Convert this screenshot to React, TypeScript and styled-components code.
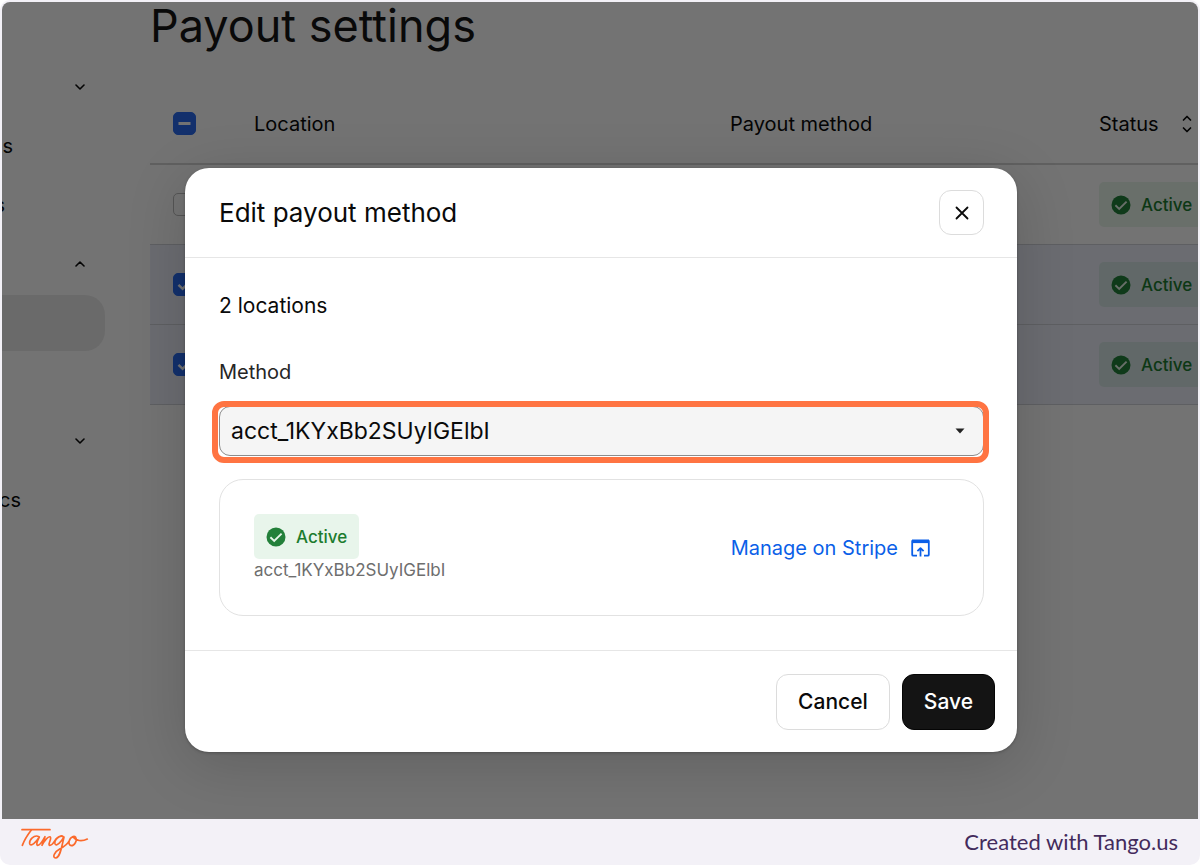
import React from 'react';
import styled, { createGlobalStyle } from 'styled-components';

const GlobalStyle = createGlobalStyle`
  *, *::before, *::after { box-sizing: border-box; }
  body {
    margin: 0;
    background: #ffffff;
    font-family: Inter, "Liberation Sans", sans-serif;
    color: #0a0a0a;
  }
`;

const Frame = styled.div`
  min-height: 100vh;
  display: flex;
  flex-direction: column;
  padding: 2px 2px 0;
  border-radius: 10px;
  background: #f3f1f7;
`;

const Stage = styled.div`
  flex: 1;
  display: grid;
  grid-template-columns: minmax(0, 1fr);
  border-radius: 8px 8px 0 0;
  overflow: hidden;
  background: #ffffff;
`;

const Page = styled.div`
  grid-area: 1 / 1;
  display: flex;
  min-width: 0;
`;

const Sidebar = styled.nav`
  flex: none;
  width: 148px;
  display: flex;
  flex-direction: column;
  gap: 3px;
  padding-top: 57px;
`;

const NavItem = styled.a<{ $active?: boolean }>`
  display: flex;
  align-items: center;
  width: 103px;
  height: 56px;
  border-radius: 0 20px 20px 0;
  background: ${(p) => (p.$active ? '#ececec' : 'transparent')};
  color: #0a0a0a;
  font-size: 20px;
  line-height: 24px;
  text-decoration: none;
`;

const NavLabel = styled.span<{ $width: number }>`
  display: flex;
  justify-content: flex-end;
  width: ${(p) => p.$width}px;
  overflow: hidden;
`;

const NavToggle = styled.button`
  display: flex;
  align-items: center;
  justify-content: flex-end;
  width: 103px;
  height: 56px;
  padding: 0 20px;
  border: 0;
  background: none;
  color: #0a0a0a;
`;

const Main = styled.main`
  flex: 1;
  min-width: 0;
`;

const PageTitle = styled.h1`
  margin: 0 0 34px;
  font-size: 45px;
  line-height: 48px;
  font-weight: 400;
  color: #161616;
`;

const Table = styled.table`
  width: 100%;
  table-layout: fixed;
  border-collapse: separate;
  border-spacing: 0;
`;

const HeadCell = styled.th<{ $width?: number }>`
  width: ${(p) => (p.$width ? `${p.$width}px` : 'auto')};
  height: 81px;
  padding: 0;
  border-bottom: 2px solid #d4d4d4;
  text-align: left;
  font-size: 20px;
  line-height: 24px;
  font-weight: 400;
  white-space: nowrap;
`;

const Row = styled.tr<{ $selected?: boolean }>`
  background: ${(p) => (p.$selected ? '#edf0fa' : 'transparent')};
`;

const Cell = styled.td`
  height: 80px;
  padding: 0;
  border-bottom: 1px solid #d0d3da;
`;

const SortHead = styled.span`
  display: flex;
  align-items: center;
  gap: 20px;
`;

const CheckWrap = styled.label`
  display: grid;
  width: 23px;
  height: 23px;
  margin-left: 23px;

  & > * {
    grid-area: 1 / 1;
  }
`;

const CheckInput = styled.input<{ $filled: boolean }>`
  appearance: none;
  width: 23px;
  height: 23px;
  margin: 0;
  border: 1px solid ${(p) => (p.$filled ? '#2a6cf0' : '#bdbdbd')};
  border-radius: 5px;
  background: ${(p) => (p.$filled ? '#2a6cf0' : 'transparent')};
`;

const Badge = styled.span`
  display: inline-flex;
  align-items: center;
  gap: 10px;
  height: 45px;
  padding: 0 12px;
  border-radius: 5px;
  background: rgba(30, 160, 60, 0.1);
  color: #1c7c2f;
  font-size: 17px;
  line-height: 24px;
  font-weight: 500;
`;

const Overlay = styled.div`
  grid-area: 1 / 1;
  z-index: 1;
  display: flex;
  align-items: flex-start;
  justify-content: center;
  padding: 166px 0 65px 2px;
  background: rgba(0, 0, 0, 0.55);
`;

const Modal = styled.section`
  width: 100%;
  max-width: 832px;
  border-radius: 24px;
  background: #ffffff;
  box-shadow: 0 12px 60px rgba(0, 0, 0, 0.16), 0 1px 3px rgba(0, 0, 0, 0.25);
`;

const ModalHeader = styled.header`
  display: flex;
  align-items: center;
  justify-content: space-between;
  height: 90px;
  padding: 0 33px 0 34px;
  border-bottom: 1px solid #e6e6e6;
`;

const ModalTitle = styled.h2`
  margin: 0;
  font-size: 26px;
  line-height: 32px;
  font-weight: 400;
`;

const CloseButton = styled.button`
  display: grid;
  place-items: center;
  width: 45px;
  height: 45px;
  padding: 0;
  border: 1px solid #dcdcdc;
  border-radius: 12px;
  background: #ffffff;
  color: #0a0a0a;
`;

const ModalBody = styled.div`
  display: flex;
  flex-direction: column;
  padding: 32px 33px 34px 34px;
`;

const Count = styled.p`
  margin: 0 0 37px;
  font-size: 21px;
  line-height: 32px;
`;

const FieldLabel = styled.label`
  margin-bottom: 21px;
  font-size: 20px;
  line-height: 26px;
  color: #262626;
`;

const SelectWrap = styled.div`
  position: relative;
  margin-bottom: 23px;
`;

const Select = styled.select`
  appearance: none;
  display: block;
  width: 100%;
  height: 50px;
  padding: 0 48px 0 11px;
  border: 1px solid #8c8c8c;
  border-radius: 11px;
  background: #f5f5f5;
  color: #0a0a0a;
  font-family: inherit;
  font-size: 23px;
  line-height: 32px;
`;

const Caret = styled.svg`
  position: absolute;
  right: 19px;
  top: 22px;
  pointer-events: none;
`;

const Highlight = styled.div`
  position: absolute;
  inset: -5px -5px -7px -7px;
  border: 6px solid #ff7442;
  border-radius: 12px;
  pointer-events: none;
`;

const AccountCard = styled.div`
  display: flex;
  align-items: center;
  justify-content: space-between;
  height: 137px;
  padding: 0 53px 0 34px;
  border: 1px solid #e2e2e2;
  border-radius: 24px;
`;

const AccountInfo = styled.div`
  display: flex;
  flex-direction: column;
  align-items: flex-start;
`;

const AccountId = styled.span`
  font-size: 17px;
  line-height: 22px;
  color: #6e6e6e;
`;

const StripeLink = styled.a`
  display: inline-flex;
  align-items: center;
  gap: 13px;
  color: #0b5fe8;
  font-size: 20px;
  line-height: 24px;
  text-decoration: none;
`;

const ModalFooter = styled.footer`
  display: flex;
  justify-content: flex-end;
  gap: 12px;
  padding: 23px 22px 22px;
  border-top: 1px solid #e6e6e6;
`;

const ActionButton = styled.button<{ $primary?: boolean }>`
  height: 56px;
  padding: 0 21px;
  border: 1px solid ${(p) => (p.$primary ? '#050505' : '#dcdcdc')};
  border-radius: 12px;
  background: ${(p) => (p.$primary ? '#141414' : '#ffffff')};
  color: ${(p) => (p.$primary ? '#ffffff' : '#0a0a0a')};
  font-family: inherit;
  font-size: 21px;
  line-height: 28px;
  font-weight: 500;
`;

const Credit = styled.footer`
  display: flex;
  align-items: center;
  justify-content: space-between;
  height: 46px;
  padding: 0 20px 0 18px;
`;

const CreditText = styled.span`
  font-family: Lato, "Liberation Sans", sans-serif;
  font-size: 22px;
  line-height: 28px;
  color: #432b5c;
`;

function Chevron({ up }: { up?: boolean }) {
  return (
    <svg width="10" height="6" viewBox="0 0 10 6" fill="none" stroke="currentColor" strokeWidth="1.6" strokeLinecap="round" strokeLinejoin="round" aria-hidden="true">
      <path d={up ? 'M1 5 5 1 9 5' : 'M1 1 5 5 9 1'} />
    </svg>
  );
}

function SortIcon() {
  return (
    <svg width="16" height="18" viewBox="0 0 16 18" fill="none" stroke="#0a0a0a" strokeWidth="1.7" strokeLinecap="round" strokeLinejoin="round" aria-hidden="true">
      <path d="M4.5 5 8 1.5 11.5 5M4.5 13 8 16.5 11.5 13" />
    </svg>
  );
}

function StatusBadge() {
  return (
    <Badge>
      <svg width="20" height="20" viewBox="0 0 20 20" aria-hidden="true">
        <circle cx="10" cy="10" r="9.5" fill="#23803a" />
        <path d="M4.4 10.2 8.2 13.9 15.6 6.6" fill="none" stroke="#e7f5ea" strokeWidth="1.9" />
      </svg>
      Active
    </Badge>
  );
}

function Check({ label, state }: { label: string; state: 'off' | 'on' | 'mixed' }) {
  return (
    <CheckWrap>
      <CheckInput type="checkbox" aria-label={label} defaultChecked={state === 'on'} $filled={state !== 'off'} />
      <svg width="23" height="23" viewBox="0 0 23 23" fill="none" stroke="#ffffff" aria-hidden="true">
        {state === 'mixed' && <path d="M5.5 11.5H17.5" strokeWidth="3" />}
        {state === 'on' && <path d="M5.5 11.8 9.6 15.8 17.5 7.8" strokeWidth="2.4" />}
      </svg>
    </CheckWrap>
  );
}

function TangoLogo() {
  return (
    <svg width="72" height="34" viewBox="24 17 216 102" role="img" aria-label="Tango" fill="none" stroke="#fb6a2c" strokeWidth="5" strokeLinecap="round" strokeLinejoin="round">
      <path d="M30 31H114" />
      <path d="M58 32C48 45 37 62 31 78" />
      <path d="M81 52C66 44 51 63 53 73C56 84 73 68 82 53C75 66 72 77 77 78C84 79 92 65 99 52L90 78C96 66 109 49 115 53C120 58 106 77 113 78C122 79 126 66 133 58C142 48 150 48 155 53C142 44 126 64 129 73C133 84 148 67 156 53C150 78 145 115 131 116C119 115 128 97 143 89C156 82 167 75 172 64C177 52 186 47 191 54C197 64 187 79 178 79C167 78 169 57 183 52C190 65 210 67 226 59" />
    </svg>
  );
}

export default function App() {
  return (
    <>
      <GlobalStyle />
      <Frame>
        <Stage>
          <Page>
            <Sidebar>
              <NavToggle aria-label="Expand section"><Chevron /></NavToggle>
              <NavItem href="#"><NavLabel $width={11}>s</NavLabel></NavItem>
              <NavItem href="#"><NavLabel $width={3}>s</NavLabel></NavItem>
              <NavToggle aria-label="Collapse section"><Chevron up /></NavToggle>
              <NavItem href="#" aria-label="Payouts" $active />
              <NavItem href="#" aria-label="Billing" />
              <NavToggle aria-label="Expand section"><Chevron /></NavToggle>
              <NavItem href="#"><NavLabel $width={19}>cs</NavLabel></NavItem>
            </Sidebar>
            <Main>
              <PageTitle>Payout settings</PageTitle>
              <Table>
                <thead>
                  <tr>
                    <HeadCell $width={104}><Check label="Select all" state="mixed" /></HeadCell>
                    <HeadCell $width={476}>Location</HeadCell>
                    <HeadCell>Payout method</HeadCell>
                    <HeadCell $width={99}><SortHead>Status <SortIcon /></SortHead></HeadCell>
                  </tr>
                </thead>
                <tbody>
                  {[false, true, true].map((selected, i) => (
                    <Row key={i} $selected={selected}>
                      <Cell><Check label={`Select row ${i + 1}`} state={selected ? 'on' : 'off'} /></Cell>
                      <Cell />
                      <Cell />
                      <Cell><StatusBadge /></Cell>
                    </Row>
                  ))}
                </tbody>
              </Table>
            </Main>
          </Page>
          <Overlay>
            <Modal role="dialog" aria-modal="true" aria-labelledby="dialog-title">
              <ModalHeader>
                <ModalTitle id="dialog-title">Edit payout method</ModalTitle>
                <CloseButton aria-label="Close">
                  <svg width="14" height="14" viewBox="0 0 14 14" stroke="currentColor" strokeWidth="1.8" strokeLinecap="round" aria-hidden="true">
                    <path d="M1.5 1.5 12.5 12.5M12.5 1.5 1.5 12.5" />
                  </svg>
                </CloseButton>
              </ModalHeader>
              <ModalBody>
                <Count>2 locations</Count>
                <FieldLabel htmlFor="method">Method</FieldLabel>
                <SelectWrap>
                  <Select id="method">
                    <option>acct_1KYxBb2SUyIGElbI</option>
                  </Select>
                  <Caret width="10" height="6" viewBox="0 0 10 6" aria-hidden="true">
                    <path d="M0.5 0.5H9.5L5 5.5Z" fill="#222222" />
                  </Caret>
                  <Highlight />
                </SelectWrap>
                <AccountCard>
                  <AccountInfo>
                    <StatusBadge />
                    <AccountId>acct_1KYxBb2SUyIGElbI</AccountId>
                  </AccountInfo>
                  <StripeLink href="#">
                    Manage on Stripe
                    <svg width="19" height="18" viewBox="0 0 19 18" fill="none" stroke="currentColor" strokeWidth="1.8" strokeLinejoin="round" aria-hidden="true">
                      <path d="M6 16.7H2.2Q1.2 16.7 1.2 15.7V2H17.8V15.7Q17.8 16.7 16.8 16.7H13" />
                      <path d="M1 2.3H18" strokeWidth="3.6" />
                      <path d="M9.5 17.5V9.5M6.4 12.2 9.5 9.1 12.6 12.2" />
                    </svg>
                  </StripeLink>
                </AccountCard>
              </ModalBody>
              <ModalFooter>
                <ActionButton type="button">Cancel</ActionButton>
                <ActionButton type="button" $primary>Save</ActionButton>
              </ModalFooter>
            </Modal>
          </Overlay>
        </Stage>
        <Credit>
          <TangoLogo />
          <CreditText>Created with Tango.us</CreditText>
        </Credit>
      </Frame>
    </>
  );
}
